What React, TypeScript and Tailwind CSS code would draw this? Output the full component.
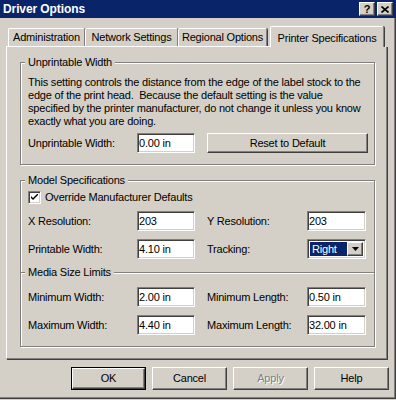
const sunken =
  'border border-[#808080] border-r-white border-b-white shadow-[inset_1px_1px_0_#404040,inset_-1px_-1px_0_#d4d0c8]';
const raised =
  'border border-white border-r-[#404040] border-b-[#404040] shadow-[inset_-1px_-1px_0_#808080] bg-[#d4d0c8]';
const etched = 'border border-[#808080] shadow-[inset_1px_1px_0_#fff,1px_1px_0_#fff]';

function Field({ value, width }: { value: string; width: string }) {
  return (
    <input
      readOnly
      defaultValue={value}
      className={`${sunken} ${width} h-[20px] bg-white pl-[1px] text-[11px] tracking-[-0.2px] text-black outline-none`}
    />
  );
}

function Legend({ children }: { children: string }) {
  return (
    <div className="-mt-[7px] ml-[4px] w-fit bg-[#d4d0c8] px-[3px] leading-[13px]">{children}</div>
  );
}

function PairRow({
  l1,
  v1,
  l2,
  v2,
  second,
}: {
  l1: string;
  v1: string;
  l2: string;
  v2?: string;
  second?: React.ReactNode;
}) {
  return (
    <div className="flex h-[20px] items-center pl-[7px]">
      <span className="w-[109px]">{l1}</span>
      <Field value={v1} width="w-[58px]" />
      <span className="ml-[12px] w-[100px]">{l2}</span>
      {second ?? <Field value={v2 ?? ''} width="w-[59px]" />}
    </div>
  );
}

function Button({ label, isDefault, disabled }: { label: string; isDefault?: boolean; disabled?: boolean }) {
  const inner = (
    <div className={`${raised} flex h-full w-full items-center justify-center`}>
      <span className={disabled ? 'text-[#808080] [text-shadow:1px_1px_0_#fff]' : 'text-black'}>{label}</span>
    </div>
  );
  if (isDefault) {
    return <div className="h-[23px] w-[75px] border border-black">{inner}</div>;
  }
  return <div className="h-[23px] w-[75px]">{inner}</div>;
}

export default function App() {
  return (
    <div
      className="flex h-[400px] w-[396px] flex-col bg-[#d4d0c8] text-[11px] tracking-[-0.2px] text-black"
      style={{ fontFamily: '"Liberation Sans", Arial, sans-serif' }}
    >
      {/* title bar */}
      <div className="flex h-[18px] items-center justify-between bg-[#0a246a] pl-[3px] pr-[3px]">
        <span className="text-[12px] font-bold tracking-[-0.1px] text-white">Driver Options</span>
        <div className="flex gap-[2px]">
          <div className={`${raised} flex h-[14px] w-[16px] items-center justify-center text-[11px] font-bold leading-none`}>
            ?
          </div>
          <div className={`${raised} flex h-[14px] w-[16px] items-center justify-center`}>
            <svg width="8" height="7" viewBox="0 0 8 7">
              <path d="M0.5 0.5 L7.5 6.5 M7.5 0.5 L0.5 6.5" stroke="#000" strokeWidth="1.6" />
            </svg>
          </div>
        </div>
      </div>

      <div className="h-[381px] border-r border-b border-[#404040] shadow-[inset_-1px_-1px_0_#808080]">
        {/* tabs */}
        <div className="mt-[8px] flex h-[20px] items-end pl-[8px]">
          {[
            ['Administration', 'w-[77px]'],
            ['Network Settings', 'w-[93px]'],
            ['Regional Options', 'w-[89px]'],
          ].map(([t, w]) => (
            <div
              key={t}
              className={`${w} flex h-[18px] items-center justify-center rounded-t-[2px] border-t border-l border-r border-white border-r-[#808080] shadow-[1px_0_0_#404040]`}
            >
              {t}
            </div>
          ))}
          <div className="relative z-10 -mb-px ml-[3px] flex h-[21px] w-[114px] items-start justify-center rounded-t-[2px] border-t border-l border-r border-white border-r-[#808080] bg-[#d4d0c8] pt-[3px] shadow-[1px_0_0_#404040]">
            Printer Specifications
          </div>
        </div>

        {/* panel */}
        <div className="ml-[6px] w-[381px] border border-white border-r-[#808080] border-b-[#808080] pt-[15px] pb-[11px] shadow-[1px_1px_0_#404040]">
          <div className={`${etched} ml-[13px] w-[355px] pb-[11px]`}>
            <Legend>Unprintable Width</Legend>
            <p className="mt-[7px] whitespace-nowrap pl-[7px] leading-[13px]">
              This setting controls the distance from the edge of the label stock to the
              <br />
              edge of the print head.&nbsp; Because the default setting is the value
              <br />
              specified by the printer manufacturer, do not change it unless you know
              <br />
              exactly what you are doing.
            </p>
            <div className="mt-[5px] flex h-[20px] items-center pl-[7px]">
              <span className="w-[109px]">Unprintable Width:</span>
              <Field value="0.00 in" width="w-[58px]" />
              <div className="ml-[12px] h-[20px] w-[161px]">
                <div className={`${raised} flex h-full w-full items-center justify-center`}>Reset to Default</div>
              </div>
            </div>
          </div>

          <div className={`${etched} mt-[15px] ml-[13px] w-[355px] pb-[11px]`}>
            <Legend>Model Specifications</Legend>
            <div className="mt-[4px] flex h-[13px] items-center pl-[7px]">
              <div className={`${sunken} flex h-[13px] w-[13px] items-center justify-center bg-white`}>
                <svg width="7" height="7" viewBox="0 0 7 7">
                  <path d="M0 2 L0 4 L2 6 L7 1 L7 -1 L2 4 Z" fill="#000" />
                </svg>
              </div>
              <span className="ml-[4px]">Override Manufacturer Defaults</span>
            </div>
            <div className="mt-[7px]">
              <PairRow l1="X Resolution:" v1="203" l2="Y Resolution:" v2="203" />
            </div>
            <div className="mt-[8px]">
              <PairRow
                l1="Printable Width:"
                v1="4.10 in"
                l2="Tracking:"
                second={
                  <div className={`${sunken} flex h-[20px] w-[59px] items-stretch bg-white p-[2px]`}>
                    <div className="flex flex-1 items-center bg-[#0a246a] pl-[2px] text-white">Right</div>
                    <div className={`${raised} flex w-[16px] items-center justify-center`}>
                      <svg width="7" height="4" viewBox="0 0 7 4">
                        <path d="M0 0 H7 L3.5 4 Z" fill="#000" />
                      </svg>
                    </div>
                  </div>
                }
              />
            </div>
            <div className="mt-[13px] border-t border-[#808080] shadow-[inset_0_1px_0_#fff]">
              <Legend>Media Size Limits</Legend>
            </div>
            <div className="mt-[8px]">
              <PairRow l1="Minimum Width:" v1="2.00 in" l2="Minimum Length:" v2="0.50 in" />
            </div>
            <div className="mt-[8px]">
              <PairRow l1="Maximum Width:" v1="4.40 in" l2="Maximum Length:" v2="32.00 in" />
            </div>
          </div>
        </div>

        {/* dialog buttons */}
        <div className="mt-[8px] ml-[71px] flex gap-[6px]">
          <Button label="OK" isDefault />
          <Button label="Cancel" />
          <Button label="Apply" disabled />
          <Button label="Help" />
        </div>
      </div>
    </div>
  );
}
